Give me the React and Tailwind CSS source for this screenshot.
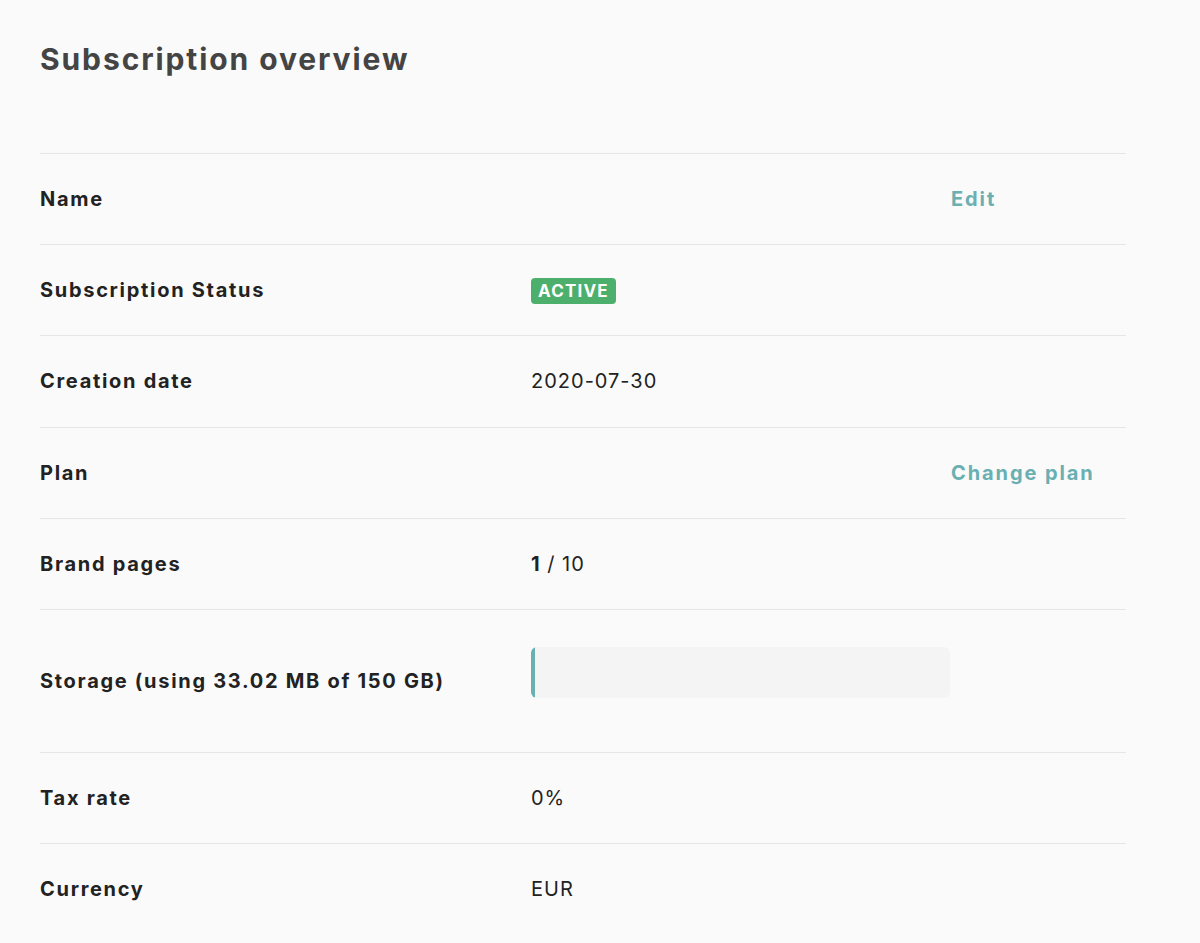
import React from "react";

const rows = [
  { label: "Name", action: "Edit" },
  { label: "Subscription Status", badge: "ACTIVE" },
  { label: "Creation date", value: "2020-07-30" },
  { label: "Plan", action: "Change plan" },
  { label: "Brand pages", pages: [1, 10] },
  { label: "Storage (using 33.02 MB of 150 GB)", storage: 0.002 },
  { label: "Tax rate", value: "0%" },
  { label: "Currency", value: "EUR" },
];

const Row = ({ row }) => {
  return (
    <div className="flex items-center border-t border-[#e6e6e6] py-[30px]">
      <div className="w-[491px] text-[20px] leading-[30.2px] font-bold tracking-[1.7px] text-[#222]">
        {row.label}
      </div>
      <div className="w-[420px] text-[20px] leading-[30.2px] tracking-[1px] text-[#222]">
        {row.value}
        {row.badge && (
          <span className="inline-flex items-center h-[26px] px-[7px] rounded-[4px] bg-[#4caf6b] text-white text-[17px] font-bold tracking-[1.2px]">
            {row.badge}
          </span>
        )}
        {row.pages && (
          <span>
            <b className="font-bold">{row.pages[0]}</b> / {row.pages[1]}
          </span>
        )}
        {row.storage !== undefined && (
          <div className="pt-[7px] pb-[24px]">
            <div className="h-[51px] w-[419px] rounded-[6px] bg-[#f4f4f4] overflow-hidden flex">
              <div className="w-[4px] bg-[#6aafb1]" />
            </div>
          </div>
        )}
      </div>
      <div className="flex-1">
        {row.action && (
          <a
            href="#"
            className="text-[20px] leading-[30px] font-bold tracking-[1.9px] text-[#6aafb1]"
          >
            {row.action}
          </a>
        )}
      </div>
    </div>
  );
};

const App = () => {
  return (
    <div
      className="min-h-[943px] bg-[#fafafa] px-10 pt-10"
      style={{ fontFamily: "Inter, 'Noto Sans', sans-serif" }}
    >
      <h1 className="text-[30px] leading-[38px] font-bold tracking-[1.9px] text-[#444] mb-[75px]">
        Subscription overview
      </h1>
      <div className="w-[1086px]">
        {rows.map((row) => (
          <Row key={row.label} row={row} />
        ))}
      </div>
    </div>
  );
};

export default App;
